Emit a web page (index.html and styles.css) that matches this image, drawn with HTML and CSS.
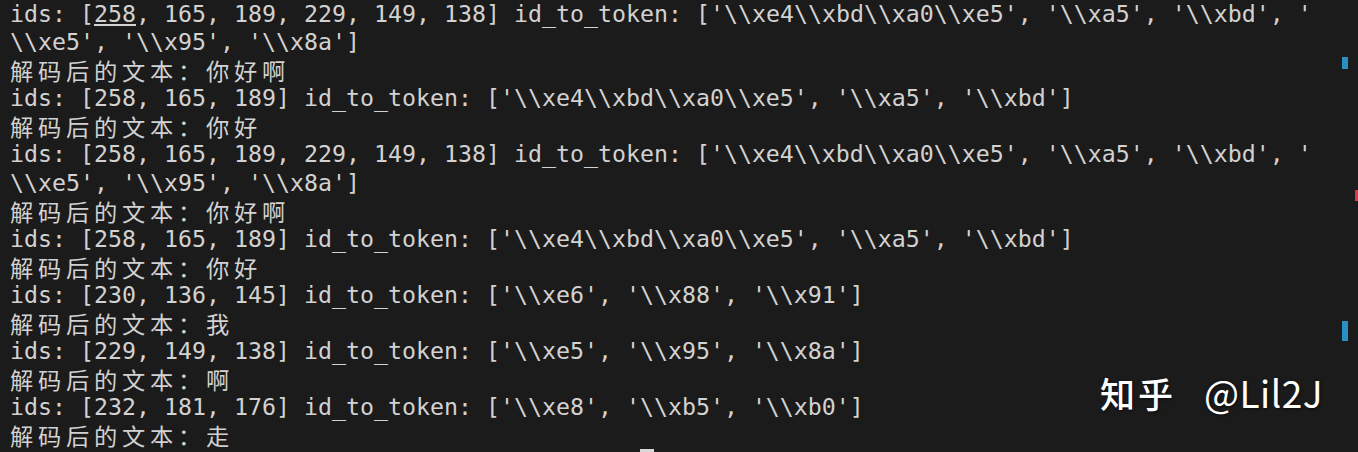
FILE: index.html
```html
<!DOCTYPE html>
<html lang="zh">
<head>
<meta charset="utf-8">
<title>terminal</title>
<link rel="stylesheet" href="styles.css">
</head>
<body>
<div class="term">
  <div class="line">ids: [<span class="link">258</span>, 165, 189, 229, 149, 138] id_to_token: ['\\xe4\\xbd\\xa0\\xe5', '\\xa5', '\\xbd', '</div>
  <div class="line">\\xe5', '\\x95', '\\x8a']</div>
  <div class="line"><span class="cjk">解码后的文本：你好啊</span></div>
  <div class="line">ids: [258, 165, 189] id_to_token: ['\\xe4\\xbd\\xa0\\xe5', '\\xa5', '\\xbd']</div>
  <div class="line"><span class="cjk">解码后的文本：你好</span></div>
  <div class="line">ids: [258, 165, 189, 229, 149, 138] id_to_token: ['\\xe4\\xbd\\xa0\\xe5', '\\xa5', '\\xbd', '</div>
  <div class="line">\\xe5', '\\x95', '\\x8a']</div>
  <div class="line"><span class="cjk">解码后的文本：你好啊</span></div>
  <div class="line">ids: [258, 165, 189] id_to_token: ['\\xe4\\xbd\\xa0\\xe5', '\\xa5', '\\xbd']</div>
  <div class="line"><span class="cjk">解码后的文本：你好</span></div>
  <div class="line">ids: [230, 136, 145] id_to_token: ['\\xe6', '\\x88', '\\x91']</div>
  <div class="line"><span class="cjk">解码后的文本：我</span></div>
  <div class="line">ids: [229, 149, 138] id_to_token: ['\\xe5', '\\x95', '\\x8a']</div>
  <div class="line"><span class="cjk">解码后的文本：啊</span></div>
  <div class="line">ids: [232, 181, 176] id_to_token: ['\\xe8', '\\xb5', '\\xb0']</div>
  <div class="line"><span class="cjk">解码后的文本：走</span></div>
</div>
<div class="cursor"></div>
<div class="mark mark-blue mark-1"></div>
<div class="mark mark-red mark-2"></div>
<div class="mark mark-blue mark-3"></div>
<div class="watermark"><span class="wm-cjk">知乎</span><span class="wm-latin">@Lil2J</span></div>
</body>
</html>
```
FILE: styles.css
```css
html, body {
  margin: 0;
  padding: 0;
  background: #1b1b1b;
  height: 452px;
  overflow: hidden;
}
body {
  position: relative;
}
.term {
  padding: 0 0 0 10px;
  font-family: "DejaVu Sans Mono", "Noto Sans CJK SC", monospace;
  font-size: 23.25px;
  color: #d2d2d2;
}
.line {
  height: 28.1px;
  line-height: 28.1px;
  white-space: pre;
}
.link {
  text-decoration: underline;
  text-underline-offset: 2px;
  text-decoration-thickness: 1.5px;
}
.cjk {
  font-family: "Noto Sans CJK SC", sans-serif;
  letter-spacing: 4.75px;
}
.cursor {
  position: absolute;
  left: 640px;
  top: 449px;
  width: 14px;
  height: 4px;
  background: #d8d8d8;
}
.mark {
  position: absolute;
}
.mark-blue {
  background: #2a8fc4;
  width: 6px;
}
.mark-red {
  background: #d0404a;
  width: 4px;
}
.mark-1 { left: 1342px; top: 57px; height: 12px; }
.mark-2 { left: 1355px; top: 190px; height: 11px; }
.mark-3 { left: 1342px; top: 321px; height: 20px; }
.watermark {
  position: absolute;
  left: 1100px;
  top: 365px;
  display: flex;
  align-items: baseline;
  gap: 28px;
  font-family: "Noto Sans CJK SC", sans-serif;
  color: #ffffff;
  text-shadow: 1px 1px 3px rgba(0,0,0,0.6);
  white-space: pre;
}
.wm-cjk {
  font-size: 35px;
  font-weight: 500;
  letter-spacing: 3px;
}
.wm-latin {
  font-size: 37px;
  font-weight: 400;
  letter-spacing: 0.5px;
}
```
